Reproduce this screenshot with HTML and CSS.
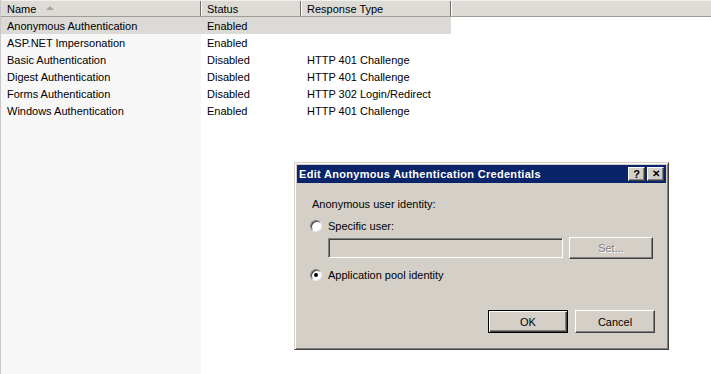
FILE: index.html
```html
<!DOCTYPE html>
<html>
<head>
<meta charset="utf-8">
<link rel="stylesheet" href="styles.css">
</head>
<body>
<div class="list">
  <div class="header">
    <div class="hcell c-name">Name <span class="sort"></span></div>
    <div class="hcell c-status">Status</div>
    <div class="hcell c-resp">Response Type</div>
    <div class="hcell c-fill"></div>
  </div>
  <div class="rows">
    <div class="row selected"><span>Anonymous Authentication</span><span>Enabled</span><span></span></div>
    <div class="row"><span>ASP.NET Impersonation</span><span>Enabled</span><span></span></div>
    <div class="row"><span>Basic Authentication</span><span>Disabled</span><span>HTTP 401 Challenge</span></div>
    <div class="row"><span>Digest Authentication</span><span>Disabled</span><span>HTTP 401 Challenge</span></div>
    <div class="row"><span>Forms Authentication</span><span>Disabled</span><span>HTTP 302 Login/Redirect</span></div>
    <div class="row"><span>Windows Authentication</span><span>Enabled</span><span>HTTP 401 Challenge</span></div>
  </div>
</div>

<div class="dialog">
  <div class="titlebar">
    <span class="title">Edit Anonymous Authentication Credentials</span>
    <span class="tbtns"><span class="tbtn">?</span><span class="tbtn x">✕</span></span>
  </div>
  <div class="dbody">
    <div class="lbl">Anonymous user identity:</div>
    <div class="radio-row r1"><span class="radio"></span><span>Specific user:</span></div>
    <div class="user-row"><div class="textbox"></div><div class="btn disabled set">Set...</div></div>
    <div class="radio-row r2"><span class="radio checked"></span><span>Application pool identity</span></div>
    <div class="actions"><div class="btn default">OK</div><div class="btn">Cancel</div></div>
  </div>
</div>
</body>
</html>
```

FILE: styles.css
```css
html, body {
  margin: 0;
  padding: 0;
  background: #fff;
  font-family: "Liberation Sans", Arial, sans-serif;
  font-size: 11px;
  color: #000;
}
.list {
  width: 711px;
  height: 374px;
  display: flex;
  flex-direction: column;
  border-left: 1px solid #c8c8c8;
  box-sizing: border-box;
}
.header {
  display: grid;
  grid-template-columns: 200px 100px 150px 1fr;
  height: 17px;
  background: #dddbd5;
  border-bottom: 1px solid #a09d96;
  box-sizing: border-box;
  border-top: 1px solid #f0efec;
}
.hcell {
  display: flex;
  align-items: center;
  padding-left: 6px;
  border-right: 1px solid #6e6c68;
  box-shadow: inset 1px 0 #fff;
  line-height: 14px;
}
.c-name { padding-left: 6px; box-shadow: none; }
.c-fill { border-right: none; }
.sort {
  display: inline-block;
  width: 0; height: 0;
  margin-left: 10px;
  border-left: 4px solid transparent;
  border-right: 4px solid transparent;
  border-bottom: 4px solid #a8a6a0;
  position: relative;
  top: -1px;
}
.rows {
  flex: 1;
  background: linear-gradient(to right, #f7f7f7 200px, #fff 200px);
}
.row {
  display: grid;
  grid-template-columns: 200px 100px 150px;
  height: 17px;
  align-items: center;
  width: 450px;
}
.row span { padding-left: 6px; white-space: nowrap; }
.row.selected { background: #dcdad6; }

/* dialog window */
.dialog {
  position: absolute;
  left: 294px;
  top: 162px;
  width: 375px;
  height: 188px;
  box-sizing: border-box;
  background: #d4d0c8;
  border: 1px solid;
  border-color: #d4d0c8 #404040 #404040 #d4d0c8;
  box-shadow: inset 1px 1px #fff, inset -1px -1px #808080;
  padding: 2px;
  display: flex;
  flex-direction: column;
}
.titlebar {
  height: 18px;
  background: #0a246a;
  color: #fff;
  display: flex;
  align-items: center;
  justify-content: space-between;
  padding: 0 2px 0 2px;
}
.title { font-weight: bold; font-size: 11px; letter-spacing: 0.3px; }
.tbtns { display: flex; gap: 2px; }
.tbtn {
  width: 17px;
  height: 14px;
  box-sizing: border-box;
  background: #d4d0c8;
  color: #000;
  border: 1px solid;
  border-color: #fff #404040 #404040 #fff;
  box-shadow: inset -1px -1px #808080;
  font-weight: bold;
  font-size: 11px;
  line-height: 12px;
  text-align: center;
}
.tbtn.x { font-size: 10px; }
.dbody {
  flex: 1;
  display: flex;
  flex-direction: column;
  padding: 14px 11px 0 13px;
}
.lbl { padding-left: 2px; line-height: 14px; }
.radio-row {
  display: flex;
  align-items: center;
  gap: 6px;
  height: 12px;
}
.r1 { margin-top: 9px; }
.r2 { margin-top: 10px; }
.radio {
  width: 12px;
  height: 12px;
  box-sizing: border-box;
  border-radius: 50%;
  background: #fff;
  border: 1px solid;
  border-color: #808080 #e8e8e8 #e8e8e8 #808080;
  box-shadow: inset 1px 1px #404040;
  position: relative;
}
.radio.checked::after {
  content: "";
  position: absolute;
  left: 3px;
  top: 3px;
  width: 4px;
  height: 4px;
  border-radius: 50%;
  background: #000;
}
.user-row {
  display: flex;
  align-items: center;
  gap: 6px;
  margin-left: 18px;
  margin-top: 5px;
}
.textbox {
  width: 235px;
  height: 20px;
  box-sizing: border-box;
  background: #d4d0c8;
  border: 1px solid;
  border-color: #808080 #fff #fff #808080;
  box-shadow: inset 1px 1px #404040;
}
.btn {
  height: 23px;
  width: 80px;
  box-sizing: border-box;
  background: #d4d0c8;
  border: 1px solid;
  border-color: #fff #404040 #404040 #fff;
  box-shadow: inset -1px -1px #808080;
  display: flex;
  align-items: center;
  justify-content: center;
}
.btn.set { width: 84px; height: 22px; }
.btn.disabled { color: #808080; text-shadow: 1px 1px #fff; }
.btn.default {
  border: 1px solid #000;
  box-shadow: inset 1px 1px #fff, inset -1px -1px #404040, inset -2px -2px #808080;
}
.actions {
  display: flex;
  justify-content: flex-end;
  gap: 7px;
  margin-top: 29px;
}
```
